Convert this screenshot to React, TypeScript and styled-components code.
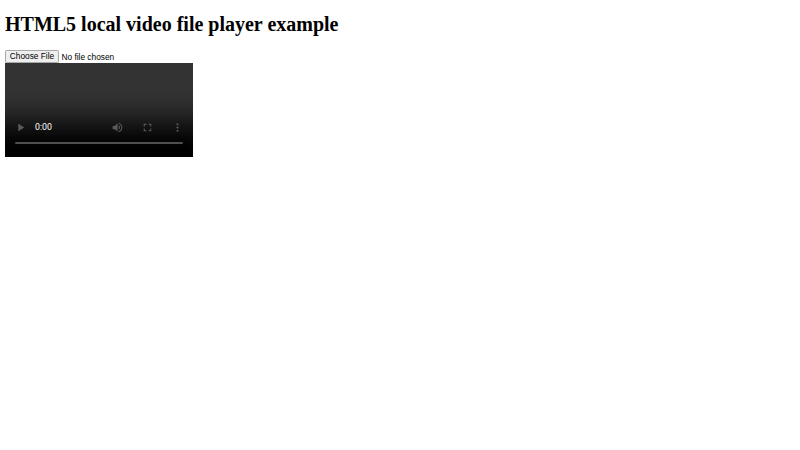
import styled, { createGlobalStyle } from "styled-components";

const GlobalStyle = createGlobalStyle`
  body {
    margin: 0;
    background: white;
    font-family: "Liberation Serif", serif;
  }
`

// the reference is a 1280x720 page shrunk to 800x450, so keep browser sizes and zoom out
const Page = styled.div`
  zoom: 0.625;
  padding: 0 8px;
  overflow: hidden;
`

const Title = styled.h1`
  font-size: 32px;
  font-weight: bold;
  margin: 21.44px 0;
`

const FileInput = styled.input`
  display: block;
  font-family: "Liberation Sans", sans-serif;
  font-size: 13.33px;
  &::file-selector-button {
    border: 1px solid #a8a8a8;
    border-radius: 2px;
    background: #efefef;
  }
`

const Video = styled.video`
  display: block;
  width: 300px;
  height: 150px;
`

const App = () => {
  return (
    <Page>
      <GlobalStyle />
      <Title>HTML5 local video file player example</Title>
      <FileInput type="file" accept="video/*" />
      <Video controls />
    </Page>
  )
}

export default App
